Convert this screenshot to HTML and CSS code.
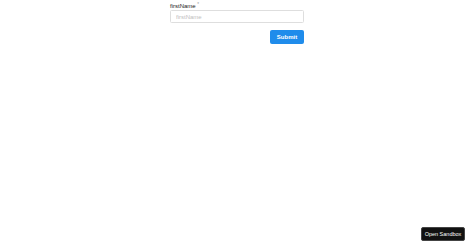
FILE: index.html
```html
<!DOCTYPE html>
<html>
<head>
<meta charset="utf-8">
<link rel="stylesheet" href="styles.css">
</head>
<body>
<div class="page">
  <form class="form">
    <label class="label">firstName <span class="req">*</span></label>
    <input class="input" type="text" placeholder="firstName">
    <div class="actions"><button class="submit" type="button">Submit</button></div>
  </form>
</div>
<button class="sandbox" type="button">Open Sandbox</button>
</body>
</html>
```
FILE: styles.css
```css
html, body { margin: 0; padding: 0; background: #fff; }
body { font-family: "Liberation Sans", Arial, sans-serif; width: 474px; height: 248px; position: relative; overflow: hidden; }
.page { display: flex; justify-content: center; }
.form { width: 134px; display: flex; flex-direction: column; }
.label { font-size: 6px; line-height: 8px; color: #222; margin-top: 0.5px; height: 9.5px; }
.req { color: #999; font-size: 4.5px; vertical-align: 2px; }
.input { box-sizing: border-box; width: 134px; height: 13px; margin: 0; border: 1px solid #dedede; border-radius: 1.5px; padding: 0 5px; font-family: inherit; font-size: 6px; color: #333; outline: none; }
.input::placeholder { color: #c0c0c0; }
.actions { display: flex; justify-content: flex-end; margin-top: 7px; }
.submit { box-sizing: border-box; width: 34px; height: 14px; border: none; border-radius: 2px; background: #1f8ceb; color: #fff; font-family: inherit; font-size: 6px; font-weight: bold; padding: 0; }
.sandbox { position: absolute; left: 421px; top: 227px; width: 44px; height: 14px; box-sizing: border-box; background: #111; color: #fff; border: 1px solid #444; border-radius: 2px; font-family: inherit; font-size: 5.5px; padding: 0; }
```
